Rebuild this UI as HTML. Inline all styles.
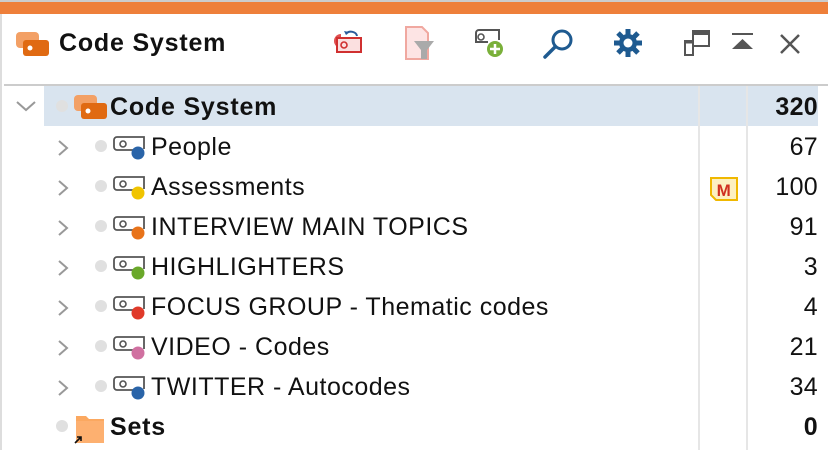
<!DOCTYPE html><html><head><style>
body{margin:0;width:828px;height:450px;overflow:hidden;background:#fff;font-family:"Liberation Sans",Arial,sans-serif;position:relative}
.a{position:absolute}
.row{position:absolute;left:0;width:828px;height:40px;font-size:25px;line-height:42px;letter-spacing:0.5px}
.chev{position:absolute;left:57px;top:13px}
.dot{position:absolute;width:12px;height:12px;border-radius:50%;background:#e0e0e0}
.lbl{position:absolute;left:151px;color:#111}
.num{position:absolute;right:10px;color:#111;letter-spacing:0.3px}
</style></head><body>
<div class="a" style="left:0;top:0;width:828px;height:2px;background:#ccc"></div>
<div class="a" style="left:0;top:2px;width:828px;height:12px;background:#ee7f3a"></div>
<div class="a" style="left:0;top:14px;width:2px;height:436px;background:#ddd"></div>
<svg class="a" style="left:16px;top:32px" width="34" height="25"><rect x="0" y="0" width="23" height="16" rx="4" fill="#f3a065"/><rect x="7" y="8" width="26" height="16" rx="3" fill="#e06a12"/><circle cx="14" cy="16" r="2.5" fill="#fff"/></svg>
<div class="a" style="left:59px;top:29px;font-size:25px;font-weight:bold;color:#111;letter-spacing:0.8px">Code System</div>
<svg class="a" style="left:331px;top:28px" width="34" height="28"><path d="M10 6a6 6 0 1 0 0 14" fill="#e05050"/><rect x="6" y="10" width="24" height="14" fill="#fbe0e0" stroke="#d03030" stroke-width="2"/><circle cx="13" cy="17" r="3" fill="none" stroke="#d03030" stroke-width="1.6"/><path d="M15 6a6 5 0 0 1 11 2" fill="none" stroke="#2a5a9a" stroke-width="2"/><path d="M13 3l2 4 3-3z" fill="#2a5a9a"/></svg>
<svg class="a" style="left:405px;top:26px" width="30" height="34"><path d="M1 1h16l6 6v26H1z" fill="#fde4e4" stroke="#f0a8a0" stroke-width="2"/><path d="M9 15h20l-7 9v9h-6v-9z" fill="#aaa"/></svg>
<svg class="a" style="left:472px;top:28px" width="34" height="30"><path d="M16 14H4V5a3 3 0 0 1 3-3h20v10" fill="none" stroke="#555" stroke-width="2"/><circle cx="9" cy="9" r="3" fill="none" stroke="#555" stroke-width="1.6"/><circle cx="23" cy="21" r="8" fill="#7ab03a"/><path d="M23 16v10M18 21h10" stroke="#fff" stroke-width="2.5"/></svg>
<svg class="a" style="left:541px;top:27px" width="36" height="32"><circle cx="21" cy="13" r="9" fill="none" stroke="#1e5a90" stroke-width="3"/><path d="M14 20L4 30" stroke="#1e5a90" stroke-width="3.5" stroke-linecap="round"/></svg>
<svg class="a" style="left:613px;top:28px" width="30" height="30"><g fill="#1e5a90"><circle cx="15" cy="15" r="9"/><g stroke="#1e5a90" stroke-width="5"><path d="M15 1v28M1 15h28M5 5l20 20M25 5L5 25"/></g></g><circle cx="15" cy="15" r="4.5" fill="#fff"/></svg>
<svg class="a" style="left:684px;top:30px" width="26" height="26"><rect x="9" y="1" width="16" height="15" fill="none" stroke="#555" stroke-width="2"/><rect x="9" y="1" width="16" height="4" fill="#555"/><path d="M1 11h8v14H1z" fill="#fff" stroke="#555" stroke-width="2"/><path d="M1 12h8" stroke="#555" stroke-width="3"/></svg>
<svg class="a" style="left:732px;top:33px" width="22" height="18"><rect x="0" y="0" width="21" height="2" fill="#555"/><path d="M0 16L10.5 6 21 16z" fill="#555"/></svg>
<svg class="a" style="left:779px;top:33px" width="22" height="22"><path d="M2 2l18 18M20 2L2 20" stroke="#555" stroke-width="2.5"/></svg>
<div class="a" style="left:4px;top:84px;width:824px;height:2px;background:#ccc"></div>
<div class="a" style="left:44px;top:86px;width:774px;height:40px;background:#d9e4ef"></div>
<div class="a" style="left:698px;top:86px;width:2px;height:364px;background:#e6e6e6"></div>
<div class="a" style="left:746px;top:86px;width:2px;height:364px;background:#e6e6e6"></div>
<div class="row" style="top:86px">
<svg class="a" style="left:15px;top:14px" width="22" height="12"><path d="M2 2l9 8 9-8" fill="none" stroke="#999" stroke-width="2"/></svg>
<div class="dot" style="left:56px;top:14px"></div>
<svg class="a" style="left:74px;top:9px" width="34" height="25"><rect x="0" y="0" width="23" height="16" rx="4" fill="#f3a065"/><rect x="7" y="8" width="26" height="16" rx="3" fill="#e06a12"/><circle cx="14" cy="16" r="2.5" fill="#fff"/></svg>
<div class="a" style="left:110px;font-weight:bold;color:#111;letter-spacing:0.8px">Code System</div>
<div class="num" style="font-weight:bold">320</div></div>
<div id="rows"></div>
<div class="row" style="top:406px">
<div class="dot" style="left:56px;top:14px"></div>
<svg class="a" style="left:74px;top:6px" width="32" height="32"><path d="M2 4h10l3 3h15v24H2z" fill="#fba860"/><rect x="2" y="9" width="28" height="22" fill="#fdb070"/><path d="M1 31l6-6M3 25h4v4" stroke="#111" stroke-width="1.6" fill="none"/></svg>
<div class="a" style="left:110px;font-weight:bold;color:#111;letter-spacing:0.8px">Sets</div>
<div class="num" style="font-weight:bold">0</div></div>
<script>
var d=[["People","67","#2a64a8"],["Assessments","100","#f0c400"],["INTERVIEW MAIN TOPICS","91","#e8731a"],["HIGHLIGHTERS","3","#6aa82a"],["FOCUS GROUP - Thematic codes","4","#e03a2a"],["VIDEO - Codes","21","#d070a0"],["TWITTER - Autocodes","34","#2a64a8"]];
var h="";d.forEach(function(r,i){var t=126+i*40;
h+='<div class="row" style="top:'+t+'px"><svg class="chev" width="12" height="18"><path d="M2 2l8 7-8 7" fill="none" stroke="#999" stroke-width="2"/></svg><div class="dot" style="left:95px;top:14px"></div><svg class="a" style="left:113px;top:10px" width="36" height="26"><path d="M22 14H4a3 3 0 0 1-3-3V4a3 3 0 0 1 3-3h27v12" fill="none" stroke="#555" stroke-width="1.8"/><circle cx="10" cy="8" r="3" fill="none" stroke="#555" stroke-width="1.6"/><circle cx="25" cy="17" r="6.5" fill="'+r[2]+'"/></svg><div class="lbl">'+r[0]+'</div><div class="num">'+r[1]+'</div>'+(i==1?'<svg class="a" style="left:710px;top:11px" width="28" height="28"><path d="M1 1h26v22H6l-5-5z" fill="#fdf0c0" stroke="#f0b800" stroke-width="2"/><text x="14" y="19" font-family="Liberation Sans" font-weight="bold" font-size="17" fill="#d03020" text-anchor="middle">M</text></svg>':'')+'</div>';});
document.getElementById("rows").outerHTML=h;
</script>
</body></html>
